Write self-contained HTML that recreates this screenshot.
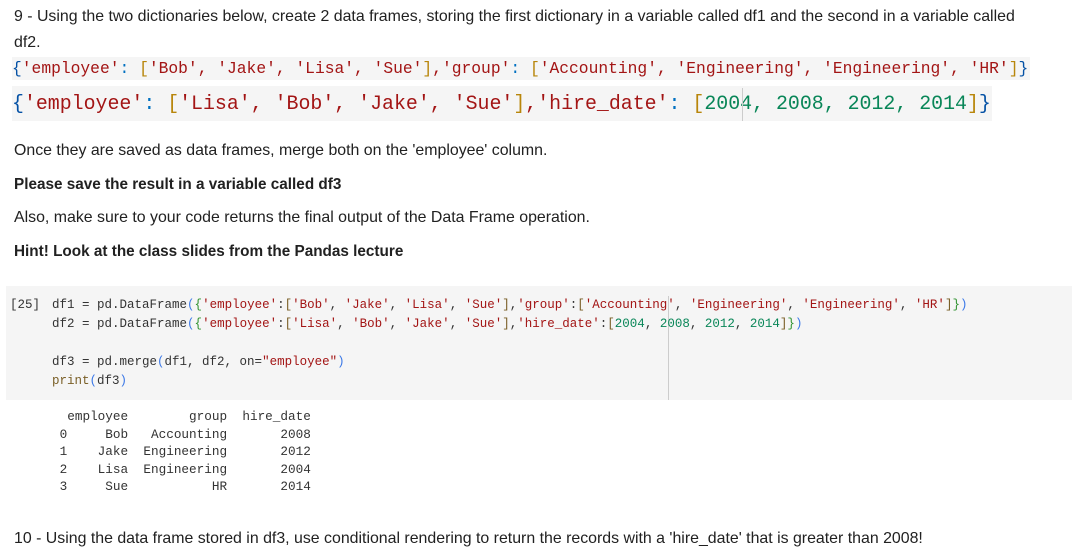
<!DOCTYPE html>
<html><head><meta charset="utf-8"><style>
body{margin:0;width:1072px;height:547px;background:#fff;position:relative;overflow:hidden;font-family:"Liberation Sans",sans-serif;color:#212121}
.t{position:absolute;left:14px;font-size:15.9px;white-space:nowrap;line-height:18px}
.b{font-weight:bold;font-size:15.3px}
.m{font-family:"Liberation Mono",monospace;white-space:pre;position:absolute}
.s{color:#a31515}.n{color:#098658}
.d1{left:12px;top:57px;height:23px;width:1018px;background:#f5f5f5;font-size:16.3px;line-height:23px;color:#a31515}
.d2{left:12px;top:86px;height:35px;width:980px;background:#f5f5f5;font-size:19.9px;line-height:35px;color:#a31515}
.cell{position:absolute;left:6px;top:286px;width:1066px;height:114px;background:#f5f5f5}
.c{font-size:12.5px;line-height:19px;color:#333}
.o{font-size:12.7px;line-height:17.5px;color:#333}
.g{color:#319331}.bl{color:#3b78e7}.br{color:#795e26}
</style></head><body>
<div class="t" style="top:8px">9 - Using the two dictionaries below, create 2 data frames, storing the first dictionary in a variable called df1 and the second in a variable called</div>
<div class="t" style="top:34px">df2.</div>
<div class="m d1"><span style="color:#0451a5">{</span>'employee'<span style="color:#0070c1">:</span> <span style="color:#b8860b">[</span>'Bob', 'Jake', 'Lisa', 'Sue'<span style="color:#b8860b">]</span>,'group'<span style="color:#0070c1">:</span> <span style="color:#b8860b">[</span>'Accounting', 'Engineering', 'Engineering', 'HR'<span style="color:#b8860b">]</span><span style="color:#0451a5">}</span></div>
<div class="m d2"><span style="color:#0451a5">{</span>'employee'<span style="color:#0070c1">:</span> <span style="color:#b8860b">[</span>'Lisa', 'Bob', 'Jake', 'Sue'<span style="color:#b8860b">]</span>,'hire_date'<span style="color:#0070c1">:</span> <span style="color:#b8860b">[</span><span class="n">2004, 2008, 2012, 2014</span><span style="color:#b8860b">]</span><span style="color:#0451a5">}</span></div>
<div style="position:absolute;left:742px;top:88px;width:1px;height:33px;background:#ccc"></div>
<div class="t" style="top:142px">Once they are saved as data frames, merge both on the 'employee' column.</div>
<div class="t b" style="top:176px">Please save the result in a variable called df3</div>
<div class="t" style="top:209px">Also, make sure to your code returns the final output of the Data Frame operation.</div>
<div class="t b" style="top:243px">Hint! Look at the class slides from the Pandas lecture</div>
<div class="cell"></div>
<div style="position:absolute;left:668px;top:296px;width:1px;height:104px;background:#ccc"></div>
<div class="m c" style="left:10px;top:296px">[25] <span style="position:absolute;left:42px;top:0">df1 = pd.DataFrame<span class="bl">(</span><span class="g">{</span><span class="s">'employee'</span>:<span class="br">[</span><span class="s">'Bob'</span>, <span class="s">'Jake'</span>, <span class="s">'Lisa'</span>, <span class="s">'Sue'</span><span class="br">]</span>,<span class="s">'group'</span>:<span class="br">[</span><span class="s">'Accounting'</span>, <span class="s">'Engineering'</span>, <span class="s">'Engineering'</span>, <span class="s">'HR'</span><span class="br">]</span><span class="g">}</span><span class="bl">)</span>
df2 = pd.DataFrame<span class="bl">(</span><span class="g">{</span><span class="s">'employee'</span>:<span class="br">[</span><span class="s">'Lisa'</span>, <span class="s">'Bob'</span>, <span class="s">'Jake'</span>, <span class="s">'Sue'</span><span class="br">]</span>,<span class="s">'hire_date'</span>:<span class="br">[</span><span class="n">2004</span>, <span class="n">2008</span>, <span class="n">2012</span>, <span class="n">2014</span><span class="br">]</span><span class="g">}</span><span class="bl">)</span>

df3 = pd.merge<span class="bl">(</span>df1, df2, on=<span class="s">"employee"</span><span class="bl">)</span>
<span class="br">print</span><span class="bl">(</span>df3<span class="bl">)</span></span></div>
<div class="m o" style="left:52px;top:408px">  employee        group  hire_date
 0     Bob   Accounting       2008
 1    Jake  Engineering       2012
 2    Lisa  Engineering       2004
 3     Sue           HR       2014</div>
<div class="t" style="top:530px">10 - Using the data frame stored in df3, use conditional rendering to return the records with a 'hire_date' that is greater than 2008!</div>
</body></html>
